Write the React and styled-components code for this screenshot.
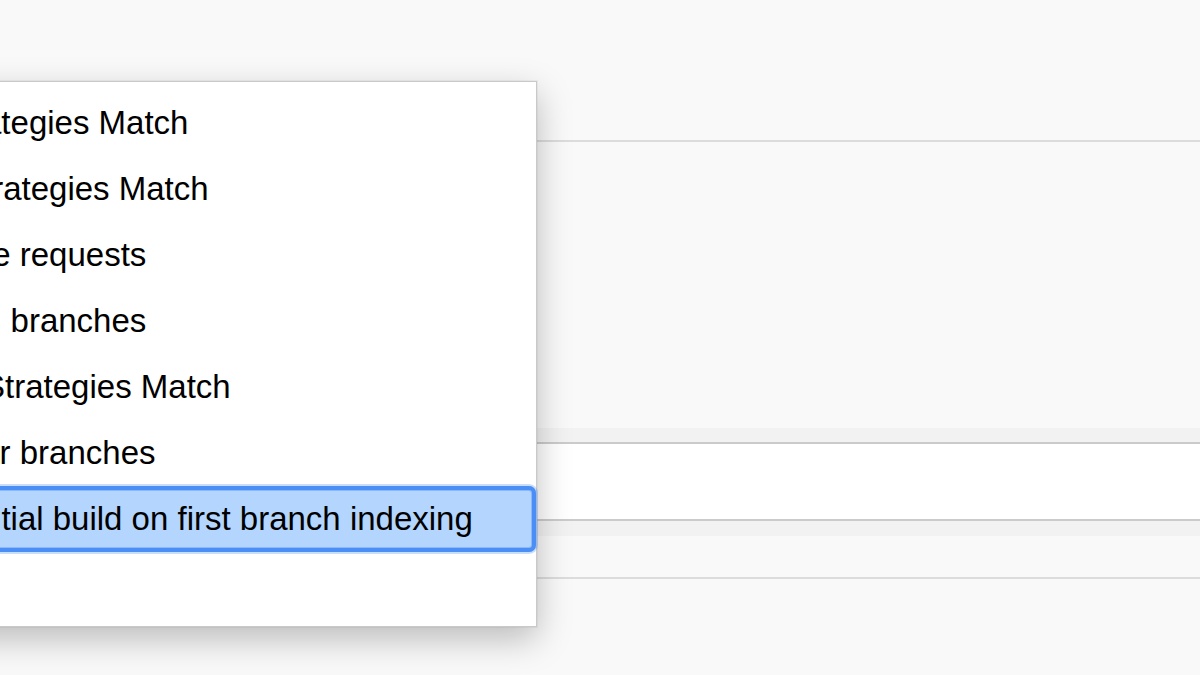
import styled, { createGlobalStyle } from "styled-components";

const GlobalStyle = createGlobalStyle`
  html, body {
    margin: 0;
    padding: 0;
    background: #f9f9f9;
    font-family: "Liberation Sans", Helvetica, Arial, sans-serif;
    overflow: hidden;
  }
`

const Page = styled.div`
  position: relative;
  width: 1200px;
  height: 675px;
  background: #f9f9f9;
  overflow: hidden;
  display: flex;
  flex-direction: column;
`

const Band = styled.div`
  height: ${props => props.h}px;
  flex: none;
  background: ${props => props.bg || "#f9f9f9"};
  border-bottom: ${props => props.line ? `2px solid ${props.line}` : "none"};
`

const Menu = styled.ul`
  position: absolute;
  left: -130px;
  top: 81px;
  width: 665px;
  margin: 0;
  padding: 8px 0;
  list-style: none;
  background: #fff;
  border: 1px solid #c9c9c9;
  box-shadow: 0 0 0 1px rgba(0, 0, 0, 0.04), 0 12px 32px rgba(0, 0, 0, 0.25);
  z-index: 2;
`

const Option = styled.li`
  box-sizing: border-box;
  height: 66px;
  display: flex;
  align-items: center;
  padding-left: 24px;
  font-size: 33px;
  color: #000;
  white-space: nowrap;
  border-radius: 7px;
  background: ${props => props.selected ? "#b3d5fe" : "transparent"};
  box-shadow: ${props => props.selected
    ? "inset 0 0 0 4px #4b8ff6, inset 0 0 0 5px rgba(75, 143, 246, 0.4), 0 0 0 2px rgba(75, 143, 246, 0.3)"
    : "none"};
`

const options = [
  "All Strategies Match",
  "Any Strategies Match",
  "Change requests",
  "Named branches",
  "None Strategies Match",
  "Regular branches",
  "Skip initial build on first branch indexing",
  "Tags",
]

const App = () => {
  return (
    <Page>
      <GlobalStyle />
      <Band h={140} line="#dcdcdc" />
      <Band h={286} />
      <Band h={14} bg="#f2f2f2" line="#cbcbcb" />
      <Band h={75} bg="#ffffff" line="#cbcbcb" />
      <Band h={15} bg="#f2f2f2" />
      <Band h={41} line="#dcdcdc" />
      <Band h={100} />
      <Menu>
        {options.map((o, i) => (
          <Option key={o} selected={i === 6}>{o}</Option>
        ))}
      </Menu>
    </Page>
  );
}

export default App;
